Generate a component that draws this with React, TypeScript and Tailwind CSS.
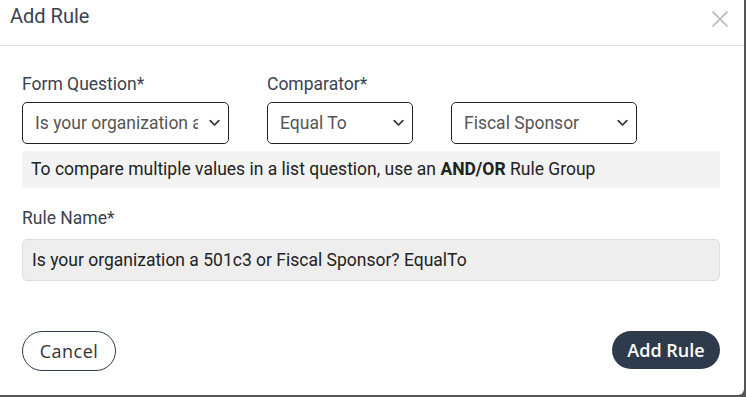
function Chevron() {
  return (
    <svg
      width="11"
      height="7"
      viewBox="0 0 11 7"
      className="pointer-events-none absolute right-[9px] top-1/2 -translate-y-1/2"
    >
      <path d="M1.2 1.2 L5.5 5.5 L9.8 1.2" fill="none" stroke="#333" strokeWidth="1.7" strokeLinecap="round" strokeLinejoin="round" />
    </svg>
  );
}

function Select({ value, width }: { value: string; width: string }) {
  return (
    <div className={`relative ${width}`}>
      <select
        defaultValue={value}
        className="h-[42px] w-full appearance-none overflow-hidden rounded-[5px] border border-[#222] bg-white pl-[12px] pr-[30px] text-[17.5px] text-[#555] outline-none"
      >
        <option>{value}</option>
      </select>
      <Chevron />
    </div>
  );
}

export default function App() {
  return (
    <div className="h-[397px] w-[746px] bg-[#555] font-['Roboto',sans-serif]">
      <div className="flex h-[395px] w-[744px] flex-col overflow-hidden rounded-br-[6px] bg-white">
        <div className="flex h-[46px] items-center justify-between border-b border-[#dee2e6] pl-[10px] pr-[15px]">
          <h2 className="-mt-[14px] text-[20px] leading-[28px] text-[#3a4250]">Add Rule</h2>
          <svg width="18" height="18" viewBox="0 0 18 18" className="-mt-[8px]">
            <path d="M1.5 1.5 L16.5 16.5 M16.5 1.5 L1.5 16.5" stroke="#c4c4c4" strokeWidth="2" />
          </svg>
        </div>

        <div className="flex flex-1 flex-col pl-[22px] pr-[24px] pt-[26px]">
          <div className="flex gap-[38px]">
            <div className="flex flex-col gap-[6px]">
              <label className="text-[17.5px] leading-[24px] text-[#3a4250]">Form Question*</label>
              <Select value="Is your organization a 501c3 or Fiscal Sponsor?" width="w-[207px]" />
            </div>
            <div className="flex flex-col gap-[6px]">
              <label className="text-[17.5px] leading-[24px] text-[#3a4250]">Comparator*</label>
              <Select value="Equal To" width="w-[146px]" />
            </div>
            <div className="flex flex-col gap-[6px]">
              <div className="h-[24px]" />
              <Select value="Fiscal Sponsor" width="w-[186px]" />
            </div>
          </div>

          <div className="mt-[7px] flex h-[37px] items-center rounded-[4px] bg-[#f3f3f3] px-[9px] text-[17.5px] text-[#222]">
            <span>
              To compare multiple values in a list question, use an <b className="font-bold">AND/OR</b> Rule Group
            </span>
          </div>

          <label className="mt-[18px] text-[17.5px] leading-[24px] text-[#3a4250]">Rule Name*</label>
          <div className="mt-[9px] flex h-[42px] items-center rounded-[5px] border border-[#ddd] bg-[#eeeeee] px-[9px] text-[17.5px] text-[#222]">
            Is your organization a 501c3 or Fiscal Sponsor? EqualTo
          </div>

          <div className="mt-[50px] flex items-start justify-between">
            <button className="h-[40px] w-[94px] rounded-full border border-[#2d3b4c] font-['Open_Sans',sans-serif] text-[18px] tracking-[0.5px] text-[#333]">
              Cancel
            </button>
            <button className="h-[38px] w-[108px] rounded-full bg-[#2d3b4c] font-['Open_Sans',sans-serif] text-[18px] font-semibold text-white">
              Add Rule
            </button>
          </div>
        </div>
      </div>
    </div>
  );
}
